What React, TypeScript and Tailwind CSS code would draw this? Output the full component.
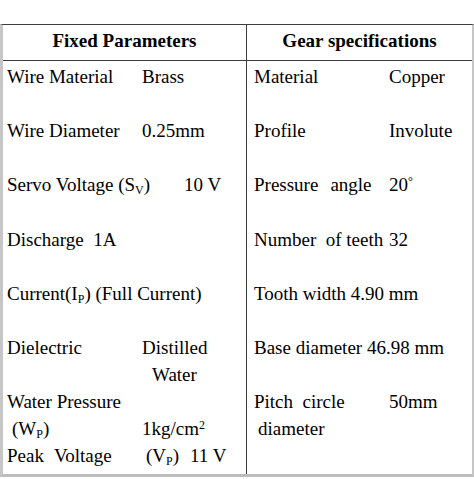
import React from 'react';

type Row = { label?: React.ReactNode; value?: React.ReactNode };

function Line({ label, value }: Row) {
  return (
    <div className="flex h-[27.1px] leading-[27.1px] whitespace-pre">
      {value !== undefined ? (
        <>
          <span className="w-[135px] shrink-0">{label}</span>
          <span>{value}</span>
        </>
      ) : (
        <span>{label}</span>
      )}
    </div>
  );
}

const Blank = () => <div className="h-[27.1px]" />;

const Sub = ({ children }: { children: React.ReactNode }) => (
  <sub className="text-[12px]">{children}</sub>
);

export default function App() {
  return (
    <div className="w-[474px] h-[479px] bg-white pt-[24px] text-black text-[19px]" style={{ fontFamily: '"Liberation Serif", "Times New Roman", serif' }}>
      <div className="h-[453px] border-t border-t-[#3c3c3c] border-l-[3px] border-l-[#c6c6c6] border-r-[2px] border-r-[#c6c6c6] border-b-[3px] border-b-[#bdbdbd] flex flex-col">
        {/* header row */}
        <div className="grid grid-cols-[243px_1fr] h-[36px] border-b border-b-[#3c3c3c] font-bold">
          <div className="text-center pt-[2px] leading-[27px]">Fixed Parameters</div>
          <div className="text-center pt-[2px] leading-[27px] border-l border-l-[#3c3c3c]">Gear specifications</div>
        </div>

        {/* body */}
        <div className="grid grid-cols-[243px_1fr] flex-1">
          <div className="pt-[2px] pl-[4px]">
            <Line label="Wire Material" value="Brass" />
            <Blank />
            <Line label="Wire Diameter" value="0.25mm" />
            <Blank />
            <Line
              label={
                <>
                  Servo Voltage (S<Sub>V</Sub>)<span className="ml-[34px]">10 V</span>
                </>
              }
            />
            <Blank />
            <Line label="Discharge  1A" />
            <Blank />
            <Line
              label={
                <>
                  Current(I<Sub>P</Sub>) (Full Current)
                </>
              }
            />
            <Blank />
            <Line label="Dielectric" value="Distilled" />
            <Line label="" value={<span className="pl-[10px]">Water</span>} />
            <Line label="Water Pressure" />
            <Line
              label={
                <span className="pl-[5px]">
                  (W<Sub>P</Sub>)
                </span>
              }
              value={
                <>
                  1kg/cm<sup className="text-[12px]">2</sup>
                </>
              }
            />
            <Line
              label={
                <>
                  Peak<span className="ml-[10px]">Voltage</span>
                </>
              }
              value={
                <span className="pl-[4px]">
                  (V<Sub>P</Sub>)<span className="ml-[11px]">11 V</span>
                </span>
              }
            />
          </div>

          <div className="pt-[2px] pl-[7px] border-l border-l-[#3c3c3c]">
            <Line label="Material" value="Copper" />
            <Blank />
            <Line label="Profile" value="Involute" />
            <Blank />
            <Line
              label={
                <>
                  Pressure<span className="ml-[12px]">angle</span>
                </>
              }
              value={
                <>
                  20<sup className="text-[12px]">°</sup>
                </>
              }
            />
            <Blank />
            <Line label="Number  of teeth" value="32" />
            <Blank />
            <Line label="Tooth width 4.90 mm" />
            <Blank />
            <Line label="Base diameter 46.98 mm" />
            <Blank />
            <Line label="Pitch  circle" value="50mm" />
            <Line label={<span className="pl-[4px]">diameter</span>} />
          </div>
        </div>
      </div>
    </div>
  );
}
